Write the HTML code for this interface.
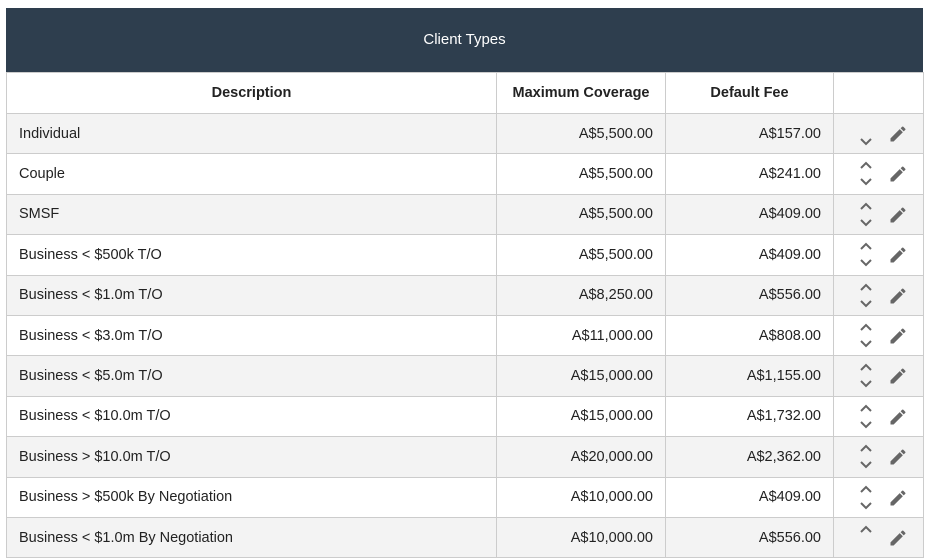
<!DOCTYPE html><html><head><style>
body{margin:0;background:#fff;font-family:"Liberation Sans",Arial,sans-serif;}
.hd{position:absolute;left:6px;top:8px;width:917px;height:64px;background:#2e3e4e;color:#fff;font-size:15px;text-align:center;line-height:64px}
table{position:absolute;left:6px;top:72px;border-collapse:collapse;width:917px;font-size:14.5px;color:#222;table-layout:fixed}
td,th{border:1px solid #ccc;padding:0 12px;height:39.4px}
th{height:40px;font-weight:bold;text-align:center}
#b tr:nth-child(odd) td{background:#f3f3f3}
td.r{text-align:right}
.ic{position:relative;padding:0}
.ar{position:absolute;left:25px;width:14px;height:10px}
.up{top:6px}.dn{top:23px}
.pen{position:absolute;left:54px;top:10px}
</style></head><body>
<div class="hd">Client Types</div>
<table>
<colgroup><col style="width:490px"><col style="width:169px"><col style="width:168px"><col style="width:90px"></colgroup>
<tr><th>Description</th><th>Maximum Coverage</th><th>Default Fee</th><th></th></tr>
<tbody id="b"></tbody>
</table>
<script>
var d=[["Individual","A$5,500.00","A$157.00"],["Couple","A$5,500.00","A$241.00"],["SMSF","A$5,500.00","A$409.00"],["Business &lt; $500k T/O","A$5,500.00","A$409.00"],["Business &lt; $1.0m T/O","A$8,250.00","A$556.00"],["Business &lt; $3.0m T/O","A$11,000.00","A$808.00"],["Business &lt; $5.0m T/O","A$15,000.00","A$1,155.00"],["Business &lt; $10.0m T/O","A$15,000.00","A$1,732.00"],["Business &gt; $10.0m T/O","A$20,000.00","A$2,362.00"],["Business &gt; $500k By Negotiation","A$10,000.00","A$409.00"],["Business &lt; $1.0m By Negotiation","A$10,000.00","A$556.00"]];
var up='<svg class="ar up" viewBox="0 0 14 10"><path d="M2 8L7 3L12 8" fill="none" stroke="#666" stroke-width="2"/></svg>';
var dn='<svg class="ar dn" viewBox="0 0 14 10"><path d="M2 2L7 7L12 2" fill="none" stroke="#666" stroke-width="2"/></svg>';
var pen='<svg class="pen" width="20" height="20" viewBox="0 0 24 24"><path fill="#666" d="M3 17.25V21h3.75L17.81 9.94l-3.75-3.75L3 17.25zM20.71 7.04a1 1 0 000-1.41l-2.34-2.34a1 1 0 00-1.41 0l-1.83 1.83 3.75 3.75 1.83-1.83z"/></svg>';
var h='';d.forEach(function(r,i){h+='<tr><td>'+r[0]+'</td><td class="r">'+r[1]+'</td><td class="r">'+r[2]+'</td><td class="ic">'+(i>0?up:'')+(i<d.length-1?dn:'')+pen+'</td></tr>'});
document.getElementById('b').innerHTML=h;
</script>
</body></html>
